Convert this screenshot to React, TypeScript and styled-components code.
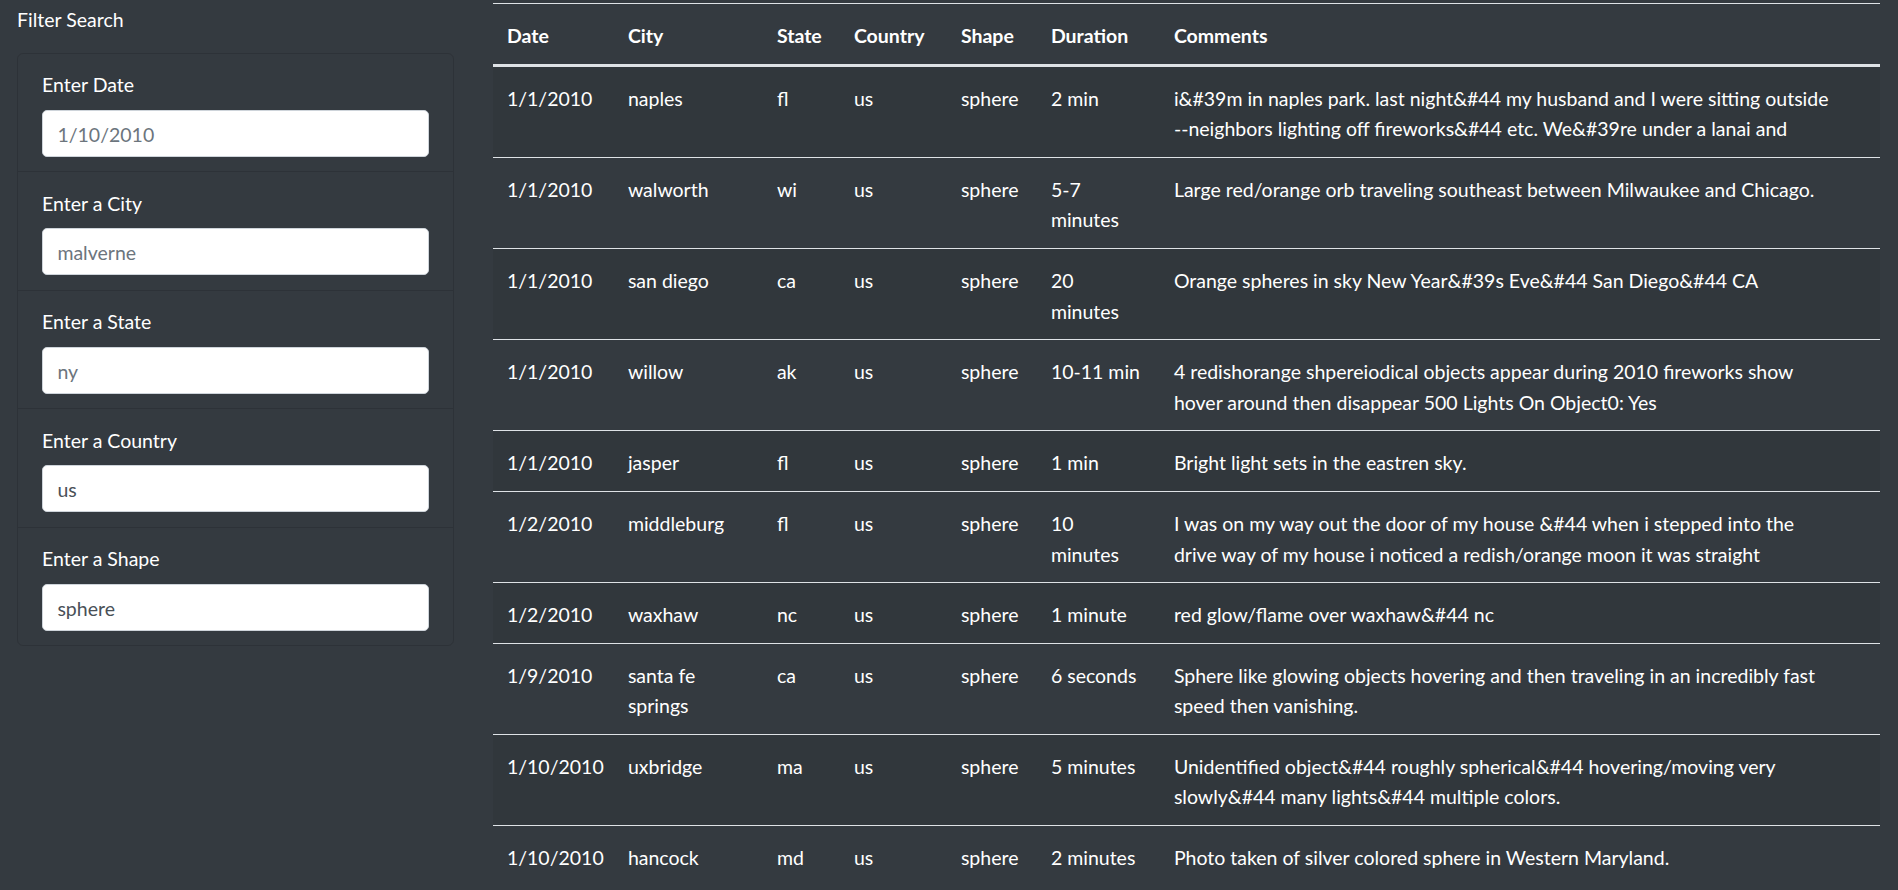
import React from 'react';
import styled, { createGlobalStyle } from 'styled-components';

const GlobalStyle = createGlobalStyle`
	html, body {
		margin: 0;
		padding: 0;
		background: #343a40;
		color: #fff;
		font-family: Lato, 'Open Sans', sans-serif;
		font-size: 19.5px;
		line-height: 30.7px;
	}
	* {
		box-sizing: border-box;
	}
`;

const Container = styled.div`
	padding: 0 18px;
`;

const Row = styled.div`
	display: flex;
	margin: 0 -18px;
`;

const SideCol = styled.aside`
	flex: 0 0 25%;
	padding: 5px 21px 0 17px;
`;

const MainCol = styled.main`
	flex: 0 0 75%;
	padding: 0 18px;
`;

const SideTitle = styled.div`
	margin-bottom: 17px;
`;

const FilterCard = styled.ul`
	list-style: none;
	margin: 0;
	padding: 0;
	border: 1px solid rgba(0, 0, 0, 0.125);
	border-radius: 6px;
	overflow: hidden;
`;

const FilterItem = styled.li`
	padding: 14.4px 24px;
	& + & {
		border-top: 1px solid rgba(0, 0, 0, 0.125);
	}
`;

const FilterLabel = styled.label`
	display: block;
	padding-top: 2px;
	margin-bottom: 9px;
`;

const FilterInput = styled.input`
	display: block;
	width: 100%;
	height: 47px;
	padding: 2px 14.4px 0;
	border: 1px solid #ced4da;
	border-radius: 5px;
	background: #fff;
	color: #495057;
	font-family: inherit;
	font-size: 19.5px;
	outline: none;
	&::placeholder {
		color: #6c757d;
		opacity: 1;
	}
`;

const Table = styled.table`
	width: 100%;
	margin-top: 3px;
	border-collapse: collapse;
	table-layout: fixed;
	color: #fff;
`;

const HeadCell = styled.th`
	padding: 17px 14.4px 11.8px;
	text-align: left;
	font-weight: 700;
	vertical-align: bottom;
	border-top: 1px solid #dee2e6;
	border-bottom: 3px solid #dee2e6;
	white-space: nowrap;
`;

const BodyRow = styled.tr`
	&:nth-of-type(odd) {
		background: rgba(0, 0, 0, 0.05);
	}
`;

const Cell = styled.td`
	padding: 17px 14.4px 11.8px;
	vertical-align: top;
	border-top: 1px solid #dee2e6;
	white-space: nowrap;
`;

type Sighting = {
	date: string;
	city: string[];
	state: string;
	country: string;
	shape: string;
	duration: string[];
	comments: string[];
};

const sightings: Sighting[] = [
	{
		date: '1/1/2010',
		city: ['naples'],
		state: 'fl',
		country: 'us',
		shape: 'sphere',
		duration: ['2 min'],
		comments: [
			'i&#39m in naples park. last night&#44 my husband and I were sitting outside',
			'--neighbors lighting off fireworks&#44 etc. We&#39re under a lanai and',
		],
	},
	{
		date: '1/1/2010',
		city: ['walworth'],
		state: 'wi',
		country: 'us',
		shape: 'sphere',
		duration: ['5-7', 'minutes'],
		comments: ['Large red/orange orb traveling southeast between Milwaukee and Chicago.'],
	},
	{
		date: '1/1/2010',
		city: ['san diego'],
		state: 'ca',
		country: 'us',
		shape: 'sphere',
		duration: ['20', 'minutes'],
		comments: ['Orange spheres in sky New Year&#39s Eve&#44 San Diego&#44 CA'],
	},
	{
		date: '1/1/2010',
		city: ['willow'],
		state: 'ak',
		country: 'us',
		shape: 'sphere',
		duration: ['10-11 min'],
		comments: [
			'4 redishorange shpereiodical objects appear during 2010 fireworks show',
			'hover around then disappear 500 Lights On Object0: Yes',
		],
	},
	{
		date: '1/1/2010',
		city: ['jasper'],
		state: 'fl',
		country: 'us',
		shape: 'sphere',
		duration: ['1 min'],
		comments: ['Bright light sets in the eastren sky.'],
	},
	{
		date: '1/2/2010',
		city: ['middleburg'],
		state: 'fl',
		country: 'us',
		shape: 'sphere',
		duration: ['10', 'minutes'],
		comments: [
			'I was on my way out the door of my house &#44 when i stepped into the',
			'drive way of my house i noticed a redish/orange moon it was straight',
		],
	},
	{
		date: '1/2/2010',
		city: ['waxhaw'],
		state: 'nc',
		country: 'us',
		shape: 'sphere',
		duration: ['1 minute'],
		comments: ['red glow/flame over waxhaw&#44 nc'],
	},
	{
		date: '1/9/2010',
		city: ['santa fe', 'springs'],
		state: 'ca',
		country: 'us',
		shape: 'sphere',
		duration: ['6 seconds'],
		comments: [
			'Sphere like glowing objects hovering and then traveling in an incredibly fast',
			'speed then vanishing.',
		],
	},
	{
		date: '1/10/2010',
		city: ['uxbridge'],
		state: 'ma',
		country: 'us',
		shape: 'sphere',
		duration: ['5 minutes'],
		comments: [
			'Unidentified object&#44 roughly spherical&#44 hovering/moving very',
			'slowly&#44 many lights&#44 multiple colors.',
		],
	},
	{
		date: '1/10/2010',
		city: ['hancock'],
		state: 'md',
		country: 'us',
		shape: 'sphere',
		duration: ['2 minutes'],
		comments: ['Photo taken of silver colored sphere in Western Maryland.'],
	},
];

const filters = [
	{ id: 'datetime', label: 'Enter Date', placeholder: '1/10/2010', value: '' },
	{ id: 'city', label: 'Enter a City', placeholder: 'malverne', value: '' },
	{ id: 'state', label: 'Enter a State', placeholder: 'ny', value: '' },
	{ id: 'country', label: 'Enter a Country', placeholder: 'us', value: 'us' },
	{ id: 'shape', label: 'Enter a Shape', placeholder: 'sphere', value: 'sphere' },
];

const columns = [
	{ title: 'Date', width: 121 },
	{ title: 'City', width: 149 },
	{ title: 'State', width: 77 },
	{ title: 'Country', width: 107 },
	{ title: 'Shape', width: 90 },
	{ title: 'Duration', width: 123 },
	{ title: 'Comments' },
];

const Lines = ({ lines }: { lines: string[] }) => (
	<>
		{lines.map((line, i) => (
			<React.Fragment key={i}>
				{i > 0 && <br />}
				{line}
			</React.Fragment>
		))}
	</>
);

export default function App() {
	return (
		<>
			<GlobalStyle />
			<Container>
				<Row>
					<SideCol>
						<SideTitle>Filter Search</SideTitle>
						<FilterCard>
							{filters.map((f) => (
								<FilterItem key={f.id}>
									<FilterLabel htmlFor={f.id}>{f.label}</FilterLabel>
									<FilterInput id={f.id} type="text" placeholder={f.placeholder} defaultValue={f.value} />
								</FilterItem>
							))}
						</FilterCard>
					</SideCol>
					<MainCol>
						<Table>
							<colgroup>
								{columns.map((c) => (
									<col key={c.title} style={c.width ? { width: c.width } : undefined} />
								))}
							</colgroup>
							<thead>
								<tr>
									{columns.map((c) => (
										<HeadCell key={c.title}>{c.title}</HeadCell>
									))}
								</tr>
							</thead>
							<tbody>
								{sightings.map((s, i) => (
									<BodyRow key={i}>
										<Cell>{s.date}</Cell>
										<Cell>
											<Lines lines={s.city} />
										</Cell>
										<Cell>{s.state}</Cell>
										<Cell>{s.country}</Cell>
										<Cell>{s.shape}</Cell>
										<Cell>
											<Lines lines={s.duration} />
										</Cell>
										<Cell>
											<Lines lines={s.comments} />
										</Cell>
									</BodyRow>
								))}
							</tbody>
						</Table>
					</MainCol>
				</Row>
			</Container>
		</>
	);
}
